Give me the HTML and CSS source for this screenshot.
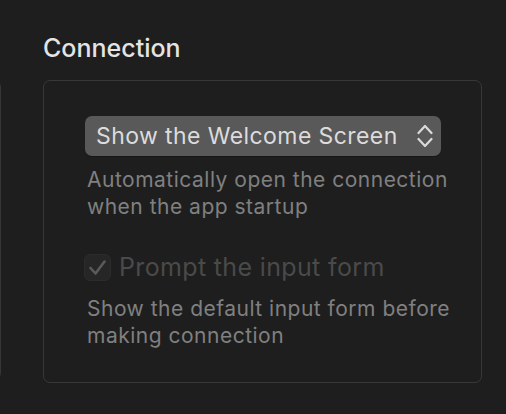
FILE: index.html
```html
<!DOCTYPE html>
<html>
<head>
<meta charset="utf-8">
<link rel="stylesheet" href="styles.css">
</head>
<body>
<div class="page">
  <div class="side"></div>
  <div class="main">
    <h2 class="title">Connection</h2>
    <div class="group">
      <div class="popup">
        <span class="popup-text">Show the Welcome Screen</span>
        <svg class="chev" width="16" height="26" viewBox="0 0 16 26">
          <path d="M1.5 10 L8 3 L14.5 10" fill="none" stroke="#dadada" stroke-width="2.2" stroke-linecap="round" stroke-linejoin="round"/>
          <path d="M1.5 16 L8 23 L14.5 16" fill="none" stroke="#dadada" stroke-width="2.2" stroke-linecap="round" stroke-linejoin="round"/>
        </svg>
      </div>
      <p class="desc">Automatically open the connection<br>when the app startup</p>
      <div class="check-row">
        <span class="checkbox">
          <svg width="27" height="27" viewBox="0 0 27 27">
            <path d="M6.5 14 L11.5 19.5 L20.5 7.5" fill="none" stroke="#5a5a5a" stroke-width="2.6" stroke-linecap="round" stroke-linejoin="round"/>
          </svg>
        </span>
        <span class="check-label">Prompt the input form</span>
      </div>
      <p class="desc desc2">Show the default input form before<br>making connection</p>
    </div>
  </div>
</div>
</body>
</html>
```

FILE: styles.css
```css
html, body {
  margin: 0;
  padding: 0;
  background: #1e1e1e;
  font-family: "Inter", "Liberation Sans", sans-serif;
  width: 506px;
  height: 414px;
  overflow: hidden;
}

.page {
  display: flex;
  align-items: flex-start;
}

.side {
  flex: none;
  width: 20px;
  height: 300px;
  margin-left: -19px;
  margin-top: 80px;
  border: 1px solid #363636;
  border-radius: 7px;
  box-sizing: border-box;
}

.main {
  flex: none;
  margin-left: 42px;
  width: 439px;
  padding-top: 33px;
}

.title {
  margin: 0 0 17px 0;
  font-size: 25px;
  line-height: 30px;
  font-weight: 500;
  color: #e4e4e4;
  letter-spacing: 0;
}

.group {
  border: 1px solid #383838;
  border-radius: 7px;
  padding: 35px 20px 33px 41px;
  display: flex;
  flex-direction: column;
  align-items: flex-start;
}

.popup {
  width: 356px;
  height: 40px;
  box-sizing: border-box;
  background: #595959;
  border-radius: 7px;
  display: flex;
  align-items: center;
  justify-content: space-between;
  padding: 0 8px 0 11px;
  box-shadow: 0 1px 0 rgba(0,0,0,0.25);
}

.popup-text {
  font-size: 23px;
  line-height: 30px;
  letter-spacing: 0.42px;
  color: #dcdcdc;
  white-space: nowrap;
}

.chev {
  display: block;
}

.desc {
  margin: 10px 0 0 2px;
  font-size: 21px;
  line-height: 27px;
  letter-spacing: 0.5px;
  color: #808080;
  white-space: nowrap;
}

.desc2 {
  margin-top: 13px;
}

.check-row {
  margin: 32px 0 0 -1px;
  display: flex;
  align-items: center;
  height: 30px;
}

.checkbox {
  width: 27px;
  height: 27px;
  box-sizing: border-box;
  border-radius: 6px;
  background: #262626;
  border: 1px solid #2c2c2c;
  display: flex;
  align-items: center;
  justify-content: center;
  margin-right: 8px;
}

.checkbox svg {
  display: block;
  flex: none;
}

.check-label {
  font-size: 25px;
  line-height: 30px;
  letter-spacing: 0.35px;
  color: #4a4a4a;
  white-space: nowrap;
}
```
